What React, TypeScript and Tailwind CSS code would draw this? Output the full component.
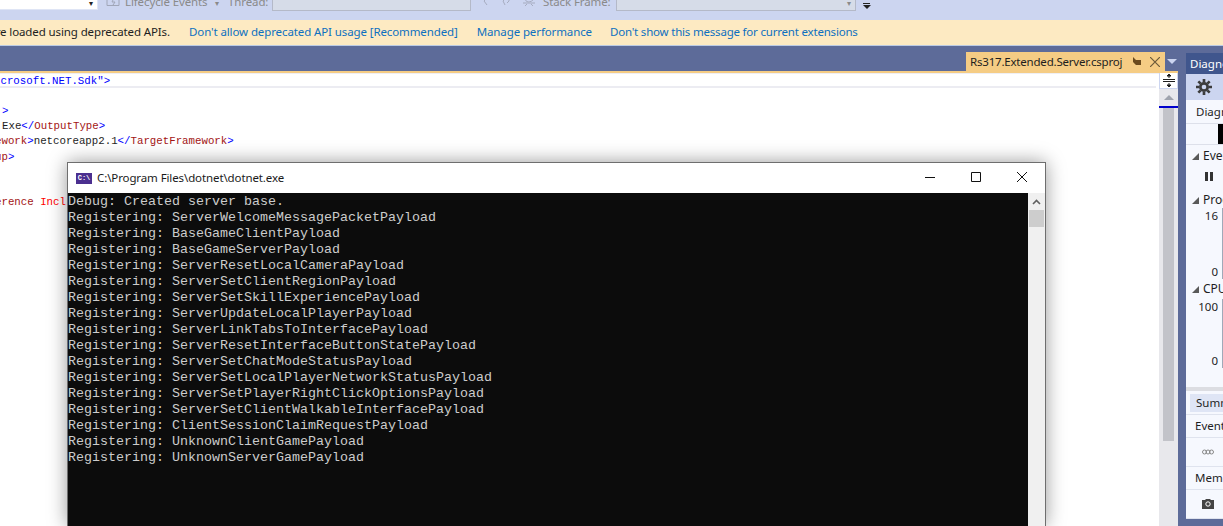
import React from "react";

const lines = [
  "Debug: Created server base.",
  "Registering: ServerWelcomeMessagePacketPayload",
  "Registering: BaseGameClientPayload",
  "Registering: BaseGameServerPayload",
  "Registering: ServerResetLocalCameraPayload",
  "Registering: ServerSetClientRegionPayload",
  "Registering: ServerSetSkillExperiencePayload",
  "Registering: ServerUpdateLocalPlayerPayload",
  "Registering: ServerLinkTabsToInterfacePayload",
  "Registering: ServerResetInterfaceButtonStatePayload",
  "Registering: ServerSetChatModeStatusPayload",
  "Registering: ServerSetLocalPlayerNetworkStatusPayload",
  "Registering: ServerSetPlayerRightClickOptionsPayload",
  "Registering: ServerSetClientWalkableInterfacePayload",
  "Registering: ClientSessionClaimRequestPayload",
  "Registering: UnknownClientGamePayload",
  "Registering: UnknownServerGamePayload",
];

const Tri = () => <span className="mr-[4px] h-0 w-0 border-b-[7px] border-l-[7px] border-b-[#595959] border-l-transparent" />;

function Toolbar() {
  return (
    <div className="flex h-5 shrink-0 items-start overflow-hidden bg-[#ccd5f0] text-[11.5px] tracking-[-0.11px] text-[#8a8a8a]">
      <div className="flex h-[10px] w-[98px] justify-end border-b border-r border-[#dfe5f5] bg-white pr-[4px] text-[8px] leading-[6px] text-[#222]">▾</div>
      <svg className="ml-[8px] mt-[-4px] shrink-0" width="16" height="11" viewBox="0 0 16 11" fill="none" stroke="#a0a6b8"><path d="M1 .5h12v9H1zM8 2 6 6h3L7 9" /></svg>
      <span className="ml-[3px] mt-[-7px] w-[86px] whitespace-nowrap">Lifecycle Events</span>
      <span className="ml-[4px] mt-[-1px] w-[8px] text-[8px] leading-[8px]">▾</span>
      <span className="ml-[5px] mt-[-7px] w-[44px]">Thread:</span>
      <div className="h-[11px] w-[199px] shrink-0 border border-t-0 border-[#b4b9c8] bg-[#d6dce8]" />
      <svg className="ml-[10px] mt-[-2px] shrink-0" width="56" height="10" viewBox="0 0 56 10" fill="none" stroke="#a6acc0"><path d="M6 0 3 3l3 4M25 0l-3 3 2 4M28 0v3l-2 2M44 0c0 5 6 5 9 1M42 5h12M44 8l2-2M52 8l-2-2" /></svg>
      <span className="ml-[6px] mt-[-7px] w-[73px] whitespace-nowrap">Stack Frame:</span>
      <div className="flex h-[11px] w-[240px] shrink-0 justify-end border border-t-0 border-[#b4b9c8] bg-[#d6dce8] pr-[4px] text-[8px] leading-[6px]">▾</div>
      <div className="ml-[7px] mt-[3px] flex w-[7px] flex-col items-center gap-[1px]">
        <div className="h-[1px] w-[7px] bg-[#222]" />
        <div className="h-0 w-0 border-x-[4px] border-t-[4px] border-x-transparent border-t-[#222]" />
      </div>
    </div>
  );
}

function InfoBar() {
  return (
    <div className="flex h-[26px] shrink-0 items-center overflow-hidden whitespace-nowrap border-b border-[#bccbe4] bg-[#fdeac2] pb-[1px] text-[11.5px] tracking-[-0.11px] text-[#1e1e1e]">
      <span className="ml-[-136px] w-[306px] text-right">extensions are loaded using deprecated APIs.</span>
      <span className="ml-[19px] text-[#0e70c0]">Don't allow deprecated API usage [Recommended]</span>
      <span className="ml-[19px] text-[#0e70c0]">Manage performance</span>
      <span className="ml-[18px] tracking-[-0.2px] text-[#0e70c0]">Don't show this message for current extensions</span>
    </div>
  );
}

function Editor() {
  const mono = "whitespace-pre font-['Liberation_Mono',monospace] text-[10.75px] leading-[15.2px]";
  return (
    <div className="flex min-h-0 flex-1 flex-col bg-[#5d6b99]">
      <div className="flex h-[25px] shrink-0 items-end justify-end">
        <div className="flex h-[19px] w-[199px] items-center bg-[#f5cc84] pl-[4px] text-[11.5px] tracking-[-0.2px] text-[#1e1e1e]">
          <span className="w-[162px] whitespace-nowrap">Rs317.Extended.Server.csproj</span>
          <svg className="shrink-0" width="10" height="9" viewBox="0 0 10 9"><path d="M1 0l3 3h5v5H4L1 5z" fill="#6b4a1d" /></svg>
          <svg className="ml-[8px] shrink-0" width="10" height="10" viewBox="0 0 10 10" stroke="#6b5a3a" strokeWidth="1.2"><path d="M0 0l10 10M10 0 0 10" /></svg>
        </div>
        <div className="ml-[2px] mr-[1px] flex h-[19px] items-center">
          <div className="h-0 w-0 border-x-[5px] border-t-[5px] border-x-transparent border-t-[#ccd5f0]" />
        </div>
      </div>
      <div className="h-[2px] shrink-0 bg-[#f5cc84]" />
      <div className="flex min-h-0 flex-1 bg-white">
        <div className="min-w-0 flex-1 overflow-hidden border-t border-[#efeff4]">
          <div className={`mr-[3px] h-[14px] border-b-[2px] border-[#ececf2] ${mono}`}>
            <div className="ml-[-6px]"><span className="text-[#0000ff]">.crosoft.NET.Sdk"&gt;</span></div>
          </div>
          <div className={`mt-[16px] ${mono}`}>
            <div className="ml-[2px] text-[#0000ff]">&gt;</div>
            <div className="ml-[2px]"><span className="text-[#1e1e1e]">Exe</span><span className="text-[#0000ff]">&lt;/</span><span className="text-[#a31515]">OutputType</span><span className="text-[#0000ff]">&gt;</span></div>
            <div className="ml-[-5px]"><span className="text-[#a31515]">ework</span><span className="text-[#0000ff]">&gt;</span><span className="text-[#1e1e1e]">netcoreapp2.1</span><span className="text-[#0000ff]">&lt;/</span><span className="text-[#a31515]">TargetFramework</span><span className="text-[#0000ff]">&gt;</span></div>
            <div className="ml-[-5px]"><span className="text-[#a31515]">up</span><span className="text-[#0000ff]">&gt;</span></div>
            <div className="ml-[-5px] mt-[30px]"><span className="text-[#a31515]">erence</span> <span className="text-[#ff0000]">Incl</span></div>
          </div>
        </div>
        <div className="flex w-[19px] shrink-0 flex-col bg-[#e8e8ec]">
          <div className="flex h-[16px] items-center justify-center border border-t-0 border-[#ccd5f0] bg-white">
            <svg width="12" height="13" viewBox="0 0 12 13" stroke="#1e1e1e" fill="#1e1e1e"><path d="M0 5.5h12M0 7.5h12M6 0v4M6 9v4" /><path d="M4 2l2-2 2 2zM4 11l2 2 2-2z" /></svg>
          </div>
          <div className="flex h-[17px] items-center justify-center">
            <div className="h-0 w-0 border-x-[5px] border-b-[5px] border-x-transparent border-b-[#a0a4ae]" />
          </div>
          <div className="h-[2px] bg-[#0000cc]" />
          <div className="mx-auto h-[333px] w-[11px] bg-[#c2c3c9]" />
        </div>
      </div>
    </div>
  );
}

function Panel() {
  const sec = "flex h-[16px] shrink-0 items-center pl-[6px] text-[12px] text-[#1e1e1e]";
  return (
    <div className="relative flex w-[37px] shrink-0 flex-col overflow-hidden whitespace-nowrap bg-[#f6f8fe] text-[11.5px] text-[#1e1e1e]">
      <div className="flex h-[21px] shrink-0 items-center bg-[#40568d] pl-[4px] text-white">Diagnostic Tools</div>
      <div className="flex h-[26px] shrink-0 items-center bg-[#ccd5f0] pl-[10px]">
        <svg width="16" height="16" viewBox="0 0 24 24" fill="none" stroke="#3c3c3c" strokeWidth="4"><circle cx="12" cy="12" r="5.5" /><path d="M12 0v5M12 19v5M0 12h5M19 12h5M3.5 3.5l3.5 3.5M17 17l3.5 3.5M3.5 20.5 7 17M17 7l3.5-3.5" strokeWidth="4" /></svg>
      </div>
      <div className="flex h-[23px] shrink-0 items-center pl-[10px]">Diagnostics</div>
      <div className="h-[22px] shrink-0 border-y border-[#dde0ea] pl-[32px]"><div className="h-full w-[5px] bg-black" /></div>
      <div className={`${sec} mt-[3px]`}><Tri />Events</div>
      <div className="flex h-[24px] shrink-0 items-center gap-[2px] pl-[19px]"><div className="h-[9px] w-[3px] bg-[#333]" /><div className="h-[9px] w-[3px] bg-[#333]" /></div>
      <div className={`${sec} mt-[4px]`}><Tri />Process</div>
      <div className="flex h-[71px] shrink-0 flex-col items-end justify-between border-r border-[#a0a8b8] pr-[4px] leading-[15px]"><span>16</span><span>0</span></div>
      <div className={`${sec} mt-[2px]`}><Tri />CPU</div>
      <div className="mt-[2px] flex h-[69px] shrink-0 flex-col items-end justify-between border-r border-[#a0a8b8] pr-[4px] leading-[15px]"><span>100</span><span>0</span></div>
      <div className="mt-[19px] h-[4px] shrink-0 bg-[#dcdde2]" />
      <div className="ml-[4px] mt-[3px] flex h-[18px] shrink-0 items-center bg-[#dfe5f5] pl-[6px]">Summary</div>
      <div className="mt-[2px] flex h-[24px] shrink-0 items-center border-y border-[#dfe3ee] pl-[9px]">Events</div>
      <div className="flex h-[29px] shrink-0 items-center border-b border-[#dfe3ee] pl-[16px]">
        <svg width="12" height="6" viewBox="0 0 12 6" fill="none" stroke="#888"><circle cx="2.5" cy="3" r="2" /><circle cx="6" cy="3" r="2" /><circle cx="9.5" cy="3" r="2" /></svg>
      </div>
      <div className="flex h-[23px] shrink-0 items-center border-b border-[#dfe3ee] pl-[9px]">Memory</div>
      <div className="flex h-[29px] shrink-0 items-center border-b border-[#dfe3ee] pl-[16px]">
        <svg width="12" height="10" viewBox="0 0 12 10"><path d="M0 1h3l1-1h4l1 1h3v9H0z" fill="#444" /><circle cx="6" cy="5" r="2.2" fill="none" stroke="#fff" /></svg>
      </div>
    </div>
  );
}

function ConsoleWindow() {
  return (
    <div className="absolute left-[67px] top-[162px] h-[364px] w-[979px] border border-b-0 border-[#6e6e6e] bg-[#0c0c0c] shadow-[0_0_18px_rgba(0,0,0,0.4)]">
      <div className="flex h-[30px] items-center bg-white pl-[8px] text-[11.5px] tracking-[-0.11px] text-[#1a1a1a]">
        <div className="flex h-[11px] w-[16px] items-center justify-center bg-[#4b2f8f] font-['Liberation_Mono',monospace] text-[7px] font-bold leading-none tracking-normal text-white">C:\</div>
        <span className="ml-[5px] whitespace-nowrap">C:\Program Files\dotnet\dotnet.exe</span>
        <div className="ml-auto flex h-full items-center">
          <svg width="46" height="30" viewBox="0 0 46 30" stroke="#111"><path d="M18 14.5h10" /></svg>
          <svg width="46" height="30" viewBox="0 0 46 30" fill="none" stroke="#111"><path d="M18.5 9.5h9v9h-9z" /></svg>
          <svg width="46" height="30" viewBox="0 0 46 30" stroke="#111"><path d="M18 9l10 10M28 9 18 19" /></svg>
        </div>
      </div>
      <div className="flex h-[333px]">
        <div className="min-w-0 flex-1 whitespace-pre pt-[1px] font-['Liberation_Mono',monospace] text-[13.33px] leading-[16px] text-[#cccccc]">
          {lines.map((l) => <div key={l}>{l}</div>)}
        </div>
        <div className="flex w-[17px] shrink-0 flex-col bg-[#f0f0f0]">
          <div className="flex h-[17px] items-center justify-center">
            <svg width="9" height="6" viewBox="0 0 9 6" fill="none" stroke="#606060" strokeWidth="1.6"><path d="M1 5l3.5-3.5L8 5" /></svg>
          </div>
          <div className="mx-auto h-[17px] w-[15px] bg-[#cdcdcd]" />
        </div>
      </div>
    </div>
  );
}

export default function App() {
  return (
    <div className="relative flex h-[526px] w-[1223px] flex-col overflow-hidden bg-white font-['Noto_Sans',sans-serif]">
      <Toolbar />
      <InfoBar />
      <div className="flex min-h-0 flex-1 bg-[#5d6b99]">
        <div className="flex w-[1178px] shrink-0 flex-col"><Editor /></div>
        <div className="w-[8px] shrink-0" />
        <div className="flex flex-col pt-[7px]"><Panel /></div>
      </div>
      <ConsoleWindow />
    </div>
  );
}
